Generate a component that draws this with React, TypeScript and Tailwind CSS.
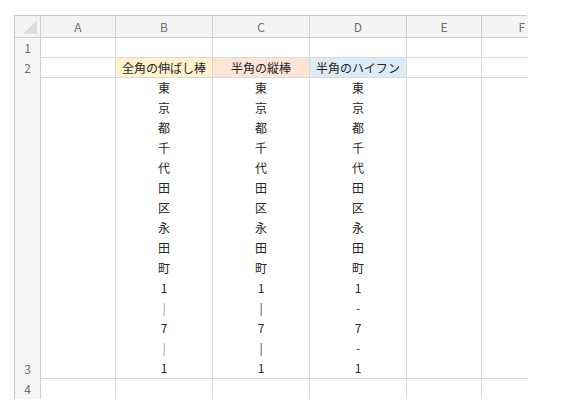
import React from 'react';

const cols = ['A', 'B', 'C', 'D', 'E', 'F'];
const vertical = ['東', '京', '都', '千', '代', '田', '区', '永', '田', '町', '1'];

const font = { fontFamily: '"Noto Sans CJK JP", "Noto Sans", sans-serif' };

function Stack({ sep, sepClass }: { sep: string; sepClass: string }) {
  const items = [...vertical, sep, '7', sep, '1'];
  return (
    <div className="flex flex-col items-center justify-end h-full text-[12px] leading-[20px] text-[#262626]">
      {items.map((c, i) => (
        <span key={i} className={c === sep ? sepClass : ''}>
          {c}
        </span>
      ))}
    </div>
  );
}

export default function App() {
  const cell = 'border-r border-b border-[#d9d9d9]';
  const head = 'bg-[#f4f4f4] border-r border-b border-[#cfcfcf] text-[#6e6e6e] text-[12px] flex items-center justify-center';
  const rowHead = 'bg-[#f6f6f6] border-r border-[#cfcfcf] text-[#6e6e6e] text-[12px] flex items-center justify-center';
  return (
    <div className="w-[568px] h-[404px] bg-white overflow-hidden pt-[15px] pl-[14px]" style={font}>
      <div className="grid grid-cols-[26px_75px_97px_97px_97px_75px_46px] grid-rows-[22px_20px_20px_301px_20px] w-[513px] border-t border-l border-[#c8c8c8]">
        {/* header row */}
        <div className={`${head} relative`}>
          <div className="absolute right-[3px] bottom-[3px] w-0 h-0 border-l-[14px] border-l-transparent border-b-[14px] border-b-[#dcdcdc]" />
        </div>
        {cols.map((c) => (
          <div key={c} className={`${head} ${c === 'F' ? 'border-r-0 justify-end pr-[3px]' : ''}`}>
            {c}
          </div>
        ))}

        {/* row 1 */}
        <div className={rowHead}>1</div>
        {cols.map((c) => (
          <div key={c} className={c === 'F' ? 'border-b border-[#d9d9d9]' : cell} />
        ))}

        {/* row 2 */}
        <div className={rowHead}>2</div>
        <div className={cell} />
        <div className={`${cell} bg-[#fff2cc] text-[12px] text-[#262626] flex items-center justify-center`}>全角の伸ばし棒</div>
        <div className={`${cell} bg-[#fce4d6] text-[12px] text-[#262626] flex items-center justify-center`}>半角の縦棒</div>
        <div className={`${cell} bg-[#ddebf7] text-[12px] text-[#262626] flex items-center justify-center`}>半角のハイフン</div>
        <div className={cell} />
        <div className="border-b border-[#d9d9d9]" />

        {/* row 3 */}
        <div className={`${rowHead} items-end leading-[20px]`}>3</div>
        <div className={cell} />
        <div className={cell}>
          <Stack sep="|" sepClass="text-[#9a9a9a]" />
        </div>
        <div className={cell}>
          <Stack sep="|" sepClass="text-[#444]" />
        </div>
        <div className={cell}>
          <Stack sep="-" sepClass="text-[#444]" />
        </div>
        <div className={cell} />
        <div className="border-b border-[#d9d9d9]" />

        {/* row 4 */}
        <div className={rowHead}>4</div>
        <div className="border-r border-[#d9d9d9]" />
        <div className="border-r border-[#d9d9d9]" />
        <div className="border-r border-[#d9d9d9]" />
        <div className="border-r border-[#d9d9d9]" />
        <div className="border-r border-[#d9d9d9]" />
        <div />
      </div>
    </div>
  );
}
